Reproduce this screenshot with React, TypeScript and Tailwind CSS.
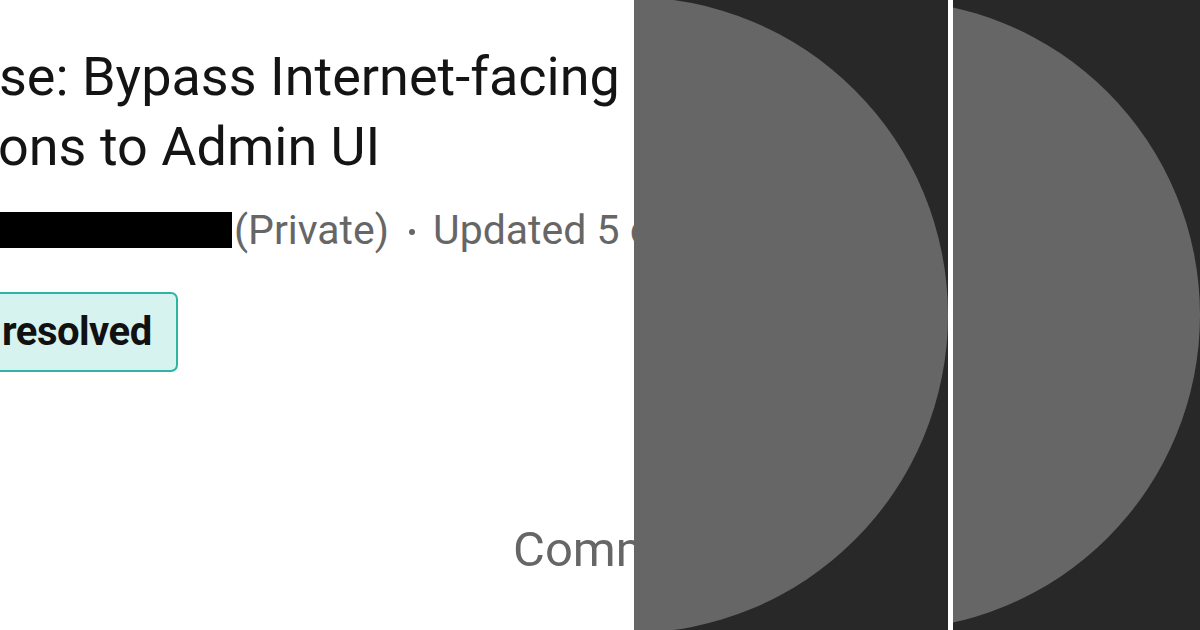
export default function App() {
  return (
    <div className="flex h-[630px] w-[1200px] overflow-hidden bg-white font-['Roboto',sans-serif]">
      {/* Issue detail column */}
      <div className="w-[634px] shrink-0 overflow-hidden pt-[42px]">
        <h1 className="whitespace-nowrap text-[54px] leading-[70px] font-normal text-[#141414]">
          <div className="-ml-[1px]">se: Bypass Internet-facing</div>
          <div className="-ml-[2px]">ons to Admin UI</div>
        </h1>

        <div className="mt-[24px] flex items-center whitespace-nowrap text-[41px] leading-[48px] text-[#666666]">
          <span className="mr-[2px] h-[36px] w-[232px] shrink-0 bg-black" />
          <span>(Private)</span>
          <span className="relative top-[2px] ml-[20px] mr-[18px] h-[6px] w-[6px] shrink-0 rounded-full bg-[#666666]" />
          <span>Updated 5 days ago</span>
        </div>

        <div className="mt-[38px] -ml-5 flex h-[80px] w-[198px] items-center rounded-[7px] border-2 border-[#2fb3a4] bg-[#d6f3ef] pl-5">
          <span className="text-[40px] leading-[40px] font-bold tracking-[-0.5px] text-[#111111]">resolved</span>
        </div>

        <div className="mt-[149px] flex items-center whitespace-nowrap text-[49px] leading-[49px] text-[#666666]">
          <div className="w-[513px] shrink-0 overflow-hidden">
            <span className="-ml-[14px] inline-block text-[28px] text-[#b5c27a] opacity-60">s</span>
          </div>
          <span>Comments</span>
        </div>
      </div>

      {/* Preview tiles */}
      <div className="relative w-[314px] shrink-0 overflow-hidden bg-[#282828]">
        <div className="absolute left-[-322px] top-[-3px] h-[636px] w-[636px] rounded-full bg-[#666666]" />
      </div>
      <div className="w-[5px] shrink-0 bg-white" />
      <div className="relative flex-1 overflow-hidden bg-[#282828]">
        <div className="absolute left-[-383px] top-0 h-[630px] w-[630px] rounded-full bg-[#666666]" />
      </div>
    </div>
  );
}
